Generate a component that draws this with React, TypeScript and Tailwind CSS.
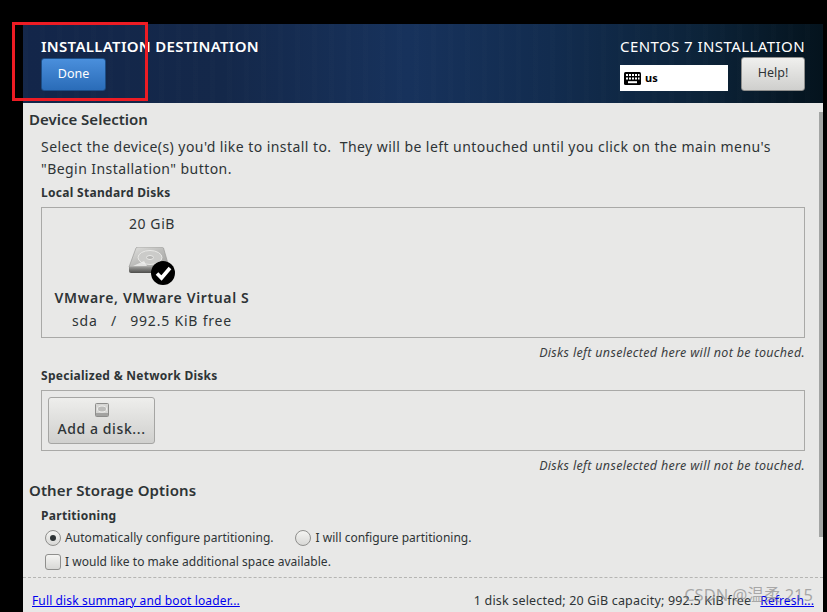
const FONT = "font-['Noto_Sans',sans-serif]";

const KeyboardIcon = () => (
  <svg width="17" height="13" viewBox="0 0 17 13">
    <rect x="0" y="0" width="17" height="13" rx="1.5" fill="#000" />
    <g fill="#fff">
      <rect x="2" y="2" width="2" height="2" />
      <rect x="5" y="2" width="2" height="2" />
      <rect x="8" y="2" width="2" height="2" />
      <rect x="11" y="2" width="2" height="2" />
      <rect x="14" y="2" width="1.5" height="2" />
      <rect x="2" y="5.5" width="2" height="2" />
      <rect x="5" y="5.5" width="2" height="2" />
      <rect x="8" y="5.5" width="2" height="2" />
      <rect x="11" y="5.5" width="2" height="2" />
      <rect x="14" y="5.5" width="1.5" height="2" />
      <rect x="4" y="9.2" width="9" height="2" />
    </g>
  </svg>
);

const DiskIcon = () => (
  <svg width="48" height="40" viewBox="0 0 48 40">
    <defs>
      <linearGradient id="top" x1="0" y1="0" x2="1" y2="1">
        <stop offset="0" stopColor="#e2e2e0" />
        <stop offset="0.5" stopColor="#bcbcba" />
        <stop offset="1" stopColor="#a0a09e" />
      </linearGradient>
      <linearGradient id="front" x1="0" y1="0" x2="0" y2="1">
        <stop offset="0" stopColor="#9a9a98" />
        <stop offset="1" stopColor="#4c4c4a" />
      </linearGradient>
    </defs>
    <path d="M1 20 L8 1 Q8.5 0 10 0 H33 Q35 0 35.5 1 L41 20 Z" fill="url(#top)" stroke="#9b9b99" strokeWidth="0.7" />
    <path d="M1 20 H41 V24 Q41 26 39 26 H3 Q1 26 1 24 Z" fill="url(#front)" />
    <ellipse cx="22" cy="10.5" rx="12" ry="7" fill="#cbcbc9" stroke="#e9e9e7" />
    <ellipse cx="22" cy="10.5" rx="3.5" ry="2" fill="#b6b6b4" stroke="#e9e9e7" />
    <path d="M5 19 L16 14 L19 19 Z" fill="#efefed" opacity="0.8" />
    <circle cx="35" cy="26" r="12" fill="#000" />
    <path d="M29 26.5 L33.5 31 L42 21" fill="none" stroke="#fff" strokeWidth="3.6" />
  </svg>
);

const SmallDisk = () => (
  <svg width="14" height="14" viewBox="0 0 14 14">
    <rect x="0.5" y="0.5" width="13" height="13" rx="1" fill="#d5d5d3" stroke="#8d8d8b" />
    <ellipse cx="7" cy="6" rx="4.5" ry="3" fill="#bcbcba" stroke="#efefed" />
    <rect x="1" y="10" width="12" height="3" fill="#a2a2a0" />
  </svg>
);

const Note = () => (
  <p className="text-[12.5px] leading-4 italic text-right text-[#3a3d3f] pr-[18px] tracking-[0.32px]">
    Disks left unselected here will not be touched.
  </p>
);

export default function App() {
  return (
    <div className={`relative w-[827px] h-[612px] overflow-hidden bg-black pt-6 pl-[23px] pr-[4px] flex flex-col ${FONT}`}>
      {/* Header */}
      <div className="h-[79px] shrink-0 flex justify-between pl-[18px] pr-[18px] bg-[repeating-linear-gradient(90deg,rgba(255,255,255,0.009)_0px,rgba(255,255,255,0.009)_5px,transparent_5px,transparent_17px),linear-gradient(90deg,#13264a_0%,#14284a_25%,#17325c_48%,#122c4f_66%,#0c2339_85%,#04131d_100%)]">
        <div className="pt-[13px]">
          <h1 className="text-[15px] leading-[18px] font-semibold text-white tracking-[0.3px]">INSTALLATION DESTINATION</h1>
          <button className="mt-[3px] w-[65px] h-[33px] rounded-[3px] border border-[#1c4d85] bg-gradient-to-b from-[#4a8fdc] to-[#2a6cb8] text-white text-[12.5px] leading-[29px] pb-[2px]">
            Done
          </button>
        </div>
        <div className="flex flex-col items-end pt-[13px]">
          <div className="text-[15px] leading-[18px] text-white tracking-[0.43px]">CENTOS 7 INSTALLATION</div>
          <div className="flex items-start mt-[-1px] gap-[13px]">
            <div className="mt-[11px] w-[108px] h-[26px] bg-white flex items-center pl-[4px] gap-[4px]">
              <KeyboardIcon />
              <span className="text-[11px] font-bold text-black">us</span>
            </div>
            <button className="mt-[3px] w-[64px] h-[34px] rounded-[3px] border border-[#8f8f8d] bg-gradient-to-b from-[#f0f0ee] to-[#cfcfcd] text-[#2e3436] text-[12.5px] pb-[2px]">
              Help!
            </button>
          </div>
        </div>
      </div>

      {/* Spoke body */}
      <div className="relative flex-1 bg-[#e8e8e7] text-[#2e3436] pt-[7px]">
        <h2 className="pl-[6px] text-[15px] leading-[18px] font-semibold">Device Selection</h2>
        <p className="pl-[18px] mt-[8px] text-[14px] leading-[22px] w-[790px] tracking-[0.44px]">
          Select the device(s) you'd like to install to.&nbsp; They will be left untouched until you click on the main menu's
          <br />
          "Begin Installation" button.
        </p>
        <h3 className="pl-[18px] mt-[5px] text-[12px] leading-4 font-bold tracking-[0.3px]">Local Standard Disks</h3>

        <div className="ml-[18px] mr-[18px] mt-[6px] h-[131px] border border-[#a9a9a7]">
          <div className="w-[220px] flex flex-col items-center">
            <span className="mt-[6px] text-[14px] leading-[20px] tracking-[0.6px]">20 GiB</span>
            <div className="mt-[13px] h-[40px]"><DiskIcon /></div>
            <span className="mt-[1px] text-[14px] leading-[20px] font-semibold whitespace-nowrap tracking-[0.64px]">VMware, VMware Virtual S</span>
            <span className="mt-[3px] text-[14px] leading-[20px] whitespace-pre tracking-[0.8px]">sda   /   992.5 KiB free</span>
          </div>
        </div>
        <div className="mt-[7px]"><Note /></div>

        <h3 className="pl-[18px] mt-[7px] text-[12px] leading-4 font-bold tracking-[0.28px]">Specialized &amp; Network Disks</h3>
        <div className="ml-[18px] mr-[18px] mt-[6px] h-[61px] border border-[#a9a9a7] pl-[6px] pt-[6px]">
          <button className="w-[107px] h-[47px] rounded-[3px] border border-[#a5a5a3] bg-gradient-to-b from-[#eeeeec] to-[#d0d0ce] flex flex-col items-center pt-[5px]">
            <SmallDisk />
            <span className="mt-[3px] text-[14px] leading-[18px] font-medium tracking-[0.6px]">Add a disk...</span>
          </button>
        </div>
        <div className="mt-[7px]"><Note /></div>

        <h2 className="pl-[6px] mt-[7px] text-[15px] leading-[18px] font-semibold tracking-[0.1px]">Other Storage Options</h2>
        <h3 className="pl-[18px] mt-[9px] text-[12px] leading-4 font-bold tracking-[0.3px]">Partitioning</h3>
        <div className="pl-[22px] mt-[6px] flex items-center text-[12px] leading-4">
          <span className="w-[16px] h-[16px] rounded-full border border-[#8f8f8d] bg-gradient-to-b from-[#f4f4f2] to-[#d8d8d6] flex items-center justify-center">
            <span className="w-[6px] h-[6px] rounded-full bg-[#2e3436]" />
          </span>
          <span className="ml-[4px] tracking-[0.05px]">Automatically configure partitioning.</span>
          <span className="ml-[21px] w-[16px] h-[16px] rounded-full border border-[#8f8f8d] bg-gradient-to-b from-[#f4f4f2] to-[#d8d8d6]" />
          <span className="ml-[5px]">I will configure partitioning.</span>
        </div>
        <div className="pl-[22px] mt-[8px] flex items-center text-[12px] leading-4 tracking-[0.03px]">
          <span className="w-[16px] h-[16px] rounded-[3px] border border-[#8f8f8d] bg-gradient-to-b from-[#f4f4f2] to-[#d8d8d6]" />
          <span className="ml-[4px]">I would like to make additional space available.</span>
        </div>
        <div className="mt-[7px] border-t border-dashed border-[#b5b5b3]" />

        <div className="mt-[15px] pl-[9px] pr-[9px] flex justify-between text-[12px] leading-4">
          <a className="text-[#0000ee] underline tracking-[0.13px]">Full disk summary and boot loader...</a>
          <div className="flex gap-[9px]">
            <span className="text-[12.5px] tracking-[0.18px]">1 disk selected; 20 GiB capacity; 992.5 KiB free</span>
            <a className="text-[#0000ee] underline tracking-[0.1px]">Refresh...</a>
          </div>
        </div>

        {/* Scrollbar */}
        <div className="absolute right-0 top-[9px] w-[4px] h-[425px] bg-[#a3a5a4]" />
      </div>

      {/* Red annotation box */}
      <div className="absolute left-[12px] top-[22px] w-[136px] h-[79px] border-[3px] border-[#ed1c24]" />
      {/* Watermark */}
      <div className="absolute right-[14px] bottom-[7px] text-[16.5px] leading-5 text-[#8a8a8a]/70 font-['Noto_Sans','Noto_Sans_CJK_SC',sans-serif]">
        CSDN @温柔 215
      </div>
    </div>
  );
}
